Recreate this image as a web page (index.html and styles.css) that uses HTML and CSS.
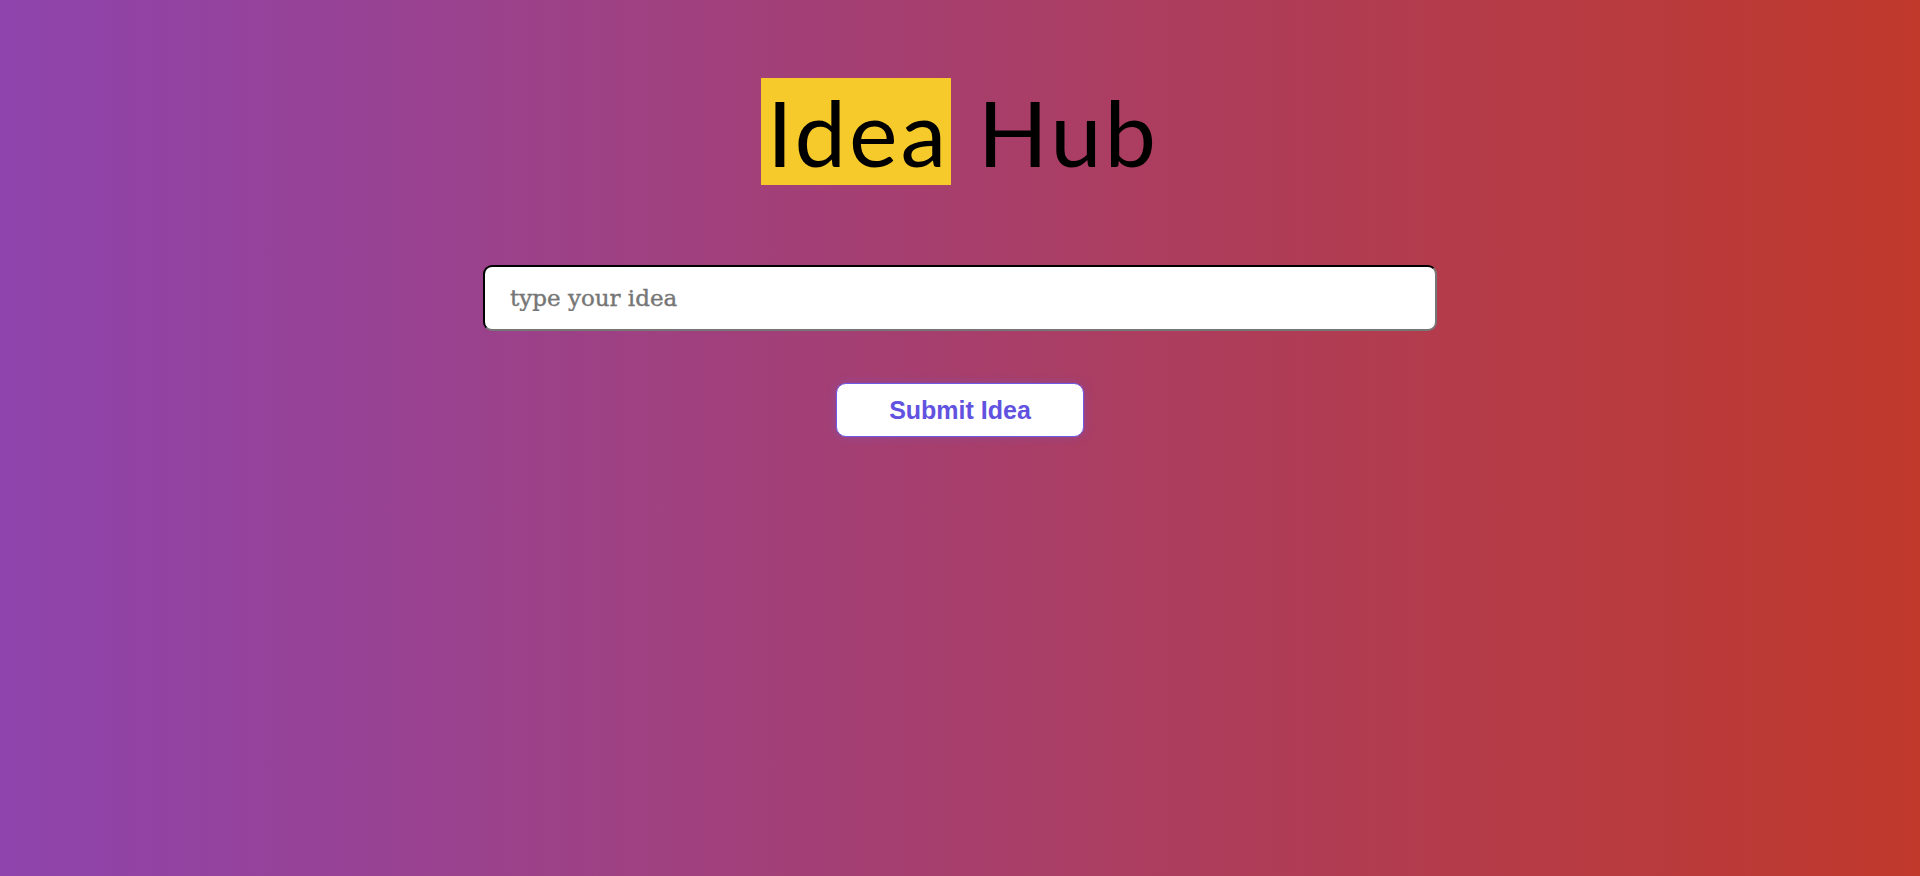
FILE: index.html
```html
<!DOCTYPE html>
<html lang="en">
<head>
  <meta charset="UTF-8" />
  <meta name="viewport" content="width=device-width, initial-scale=1.0" />
  <title>Idea Hub</title>
  <link rel="stylesheet" href="styles.css">
</head>
<body>
  <div class="container">
    <h1 class="title"><span class="highlight">Idea</span> Hub</h1>

    <form class="idea-form">
      <input type="text" class="idea-input" placeholder="type your idea" />
      <button type="submit" class="submit-btn">Submit Idea</button>
    </form>
  </div>
</body>
</html>
```

FILE: styles.css
```css
body {
  margin: 0;
  padding: 0;
  min-height: 100vh;
  background: linear-gradient(to right, #8e44ad, #c0392b);
  font-family: 'Liberation Sans', Arial, sans-serif;
}

.container {
  display: flex;
  flex-direction: column;
  align-items: center;
  padding-top: 78px;
}

.title {
  margin: 0;
  font-family: 'Lato', sans-serif;
  font-weight: 400;
  font-size: 92px;
  line-height: 107px;
  color: #000;
  letter-spacing: 3px;
}

/* fondo amarillo solo para la palabra Idea */
.highlight {
  display: inline-block;
  background-color: #f7ca2c;
  padding: 0 2px 0 6px;
}

.idea-form {
  display: flex;
  flex-direction: column;
  align-items: center;
  margin-top: 80px;
}

.idea-input {
  box-sizing: border-box;
  width: 954px;
  height: 66px;
  padding: 0 25px;
  border: 2px inset #767676;
  border-top-color: #1f1f1f;
  border-left-color: #1f1f1f;
  border-radius: 9px;
  font-family: 'DejaVu Serif', serif;
  font-size: 23px;
  -webkit-text-stroke: 0.4px #767676;
  background-color: #fff;
}

.idea-input::placeholder {
  color: #767676;
}

.submit-btn {
  box-sizing: border-box;
  margin-top: 52px;
  width: 248px;
  height: 54px;
  background-color: #fff;
  color: #6252e0;
  border: 1px solid #6c5ce7;
  border-radius: 10px;
  font-family: 'Liberation Sans', Arial, sans-serif;
  font-weight: bold;
  font-size: 25px;
  cursor: pointer;
  box-shadow: 0 0 10px rgba(108, 92, 231, 0.35);
}
```
